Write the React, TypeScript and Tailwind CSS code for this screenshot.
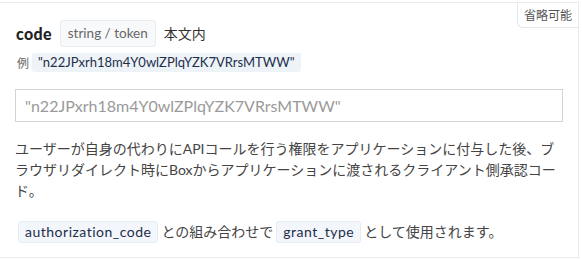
const latin = "font-['Lato','Noto_Sans_CJK_JP',sans-serif]";

function Code({ children }: { children: React.ReactNode }) {
  return (
    <code className="mx-[3px] inline-block rounded-[3px] border border-[#e6ecf2] bg-[#f3f6fa] px-[6px] py-0 text-[14px] leading-[20px] tracking-[0.5px] text-[#1d2e4a] font-['Lato',sans-serif]">
      {children}
    </code>
  );
}

export default function App() {
  return (
    <div className={`h-[260px] w-[582px] overflow-hidden bg-white pt-[2px] ${latin}`}>
      <div className="relative h-[256px] w-[579px] border-b border-r border-t border-[#e6ebf0] bg-white pl-[15px] pr-[15px] pt-[17px]">
        {/* Optional badge */}
        <span className="absolute right-0 top-0 rounded-bl-[6px] border-b border-l border-[#e3e8ed] px-[6px] py-[3px] text-[12px] leading-[18px] text-[#555] font-['Noto_Sans_CJK_JP',sans-serif]">
          省略可能
        </span>

        <div className="flex items-center gap-[8px] pl-[1px]">
          <span className="text-[16px] font-black tracking-[0.3px] text-[#222]">code</span>
          <span className="rounded-[3px] border border-[#e8ecf0] bg-[#f8f9fb] px-[7px] text-[13.5px] leading-[25px] text-[#666]">
            string / token
          </span>
          <span className="text-[14px] text-[#333]">本文内</span>
        </div>

        <div className="mt-[6px] flex items-center gap-[3px] pl-[2px]">
          <span className="text-[12px] text-[#666] font-['Noto_Sans_CJK_JP',sans-serif]">例</span>
          <span className="rounded-[3px] bg-[#eef3f8] px-[6px] text-[13px] leading-[19px] text-[#1d2e4a]">
            "n22JPxrh18m4Y0wlZPlqYZK7VRrsMTWW"
          </span>
        </div>

        <input
          className="mt-[17px] block h-[33px] w-[548px] border border-[#cdd4da] px-[9px] text-[16px] text-[#333] outline-none placeholder:text-[#9a9a9a]"
          placeholder={'"n22JPxrh18m4Y0wlZPlqYZK7VRrsMTWW"'}
        />

        <p className="mt-[16px] w-[548px] text-[14px] leading-[21px] text-[#444]">
          ユーザーが自身の代わりにAPIコールを行う権限をアプリケーションに付与した後、ブラウザリダイレクト時にBoxからアプリケーションに渡されるクライアント側承認コード。
        </p>

        <p className="mt-[20px] text-[14px] leading-[21px] text-[#444]">
          <Code>authorization_code</Code>との組み合わせで<Code>grant_type</Code>として使用されます。
        </p>
      </div>
    </div>
  );
}
